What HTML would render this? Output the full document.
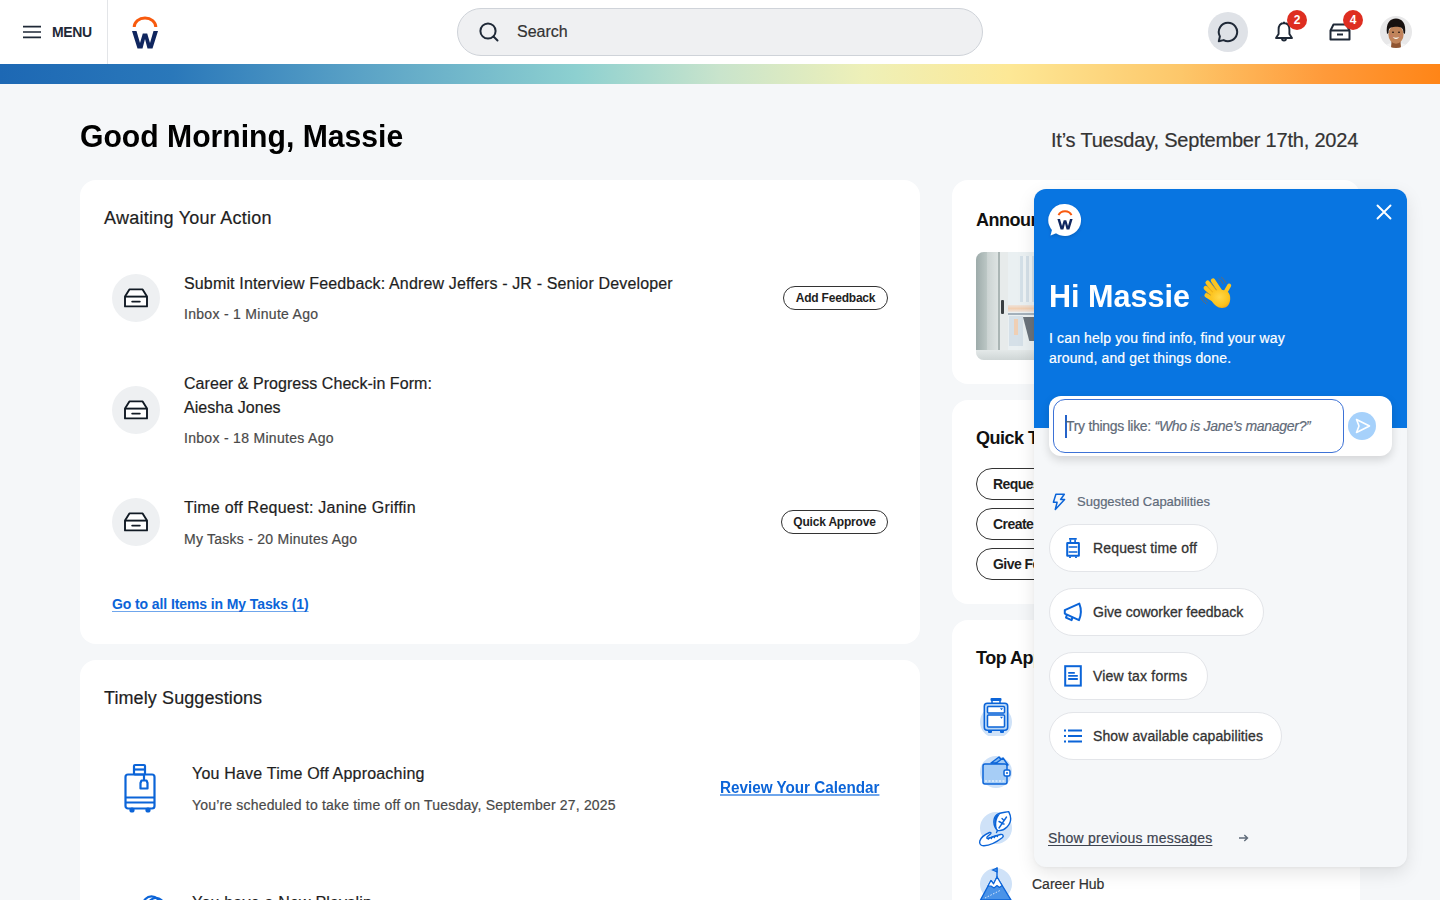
<!DOCTYPE html>
<html><head><meta charset="utf-8">
<style>
*{box-sizing:border-box;margin:0;padding:0}
html,body{width:1440px;height:900px;overflow:hidden;background:#f5f7f9;font-family:"Liberation Sans",sans-serif;color:#1e1e1e}
.a{position:absolute;white-space:nowrap;-webkit-text-stroke:0.2px currentColor}
svg{position:absolute;display:block}
#hdr{position:absolute;left:0;top:0;width:1440px;height:64px;background:#fff}
#grad{position:absolute;left:0;top:64px;width:1440px;height:20px;
 background:linear-gradient(90deg,#1d68b4 0%,#2a78ba 12%,#5aa2c6 25%,#8dd0d0 40%,#c9e4cc 50%,#eef0b8 60%,#fde896 70%,#fdc76a 82%,#ff9a3a 92%,#ff8517 100%)}
.card{position:absolute;background:#fff;border-radius:16px}
.t16{font-size:16px;line-height:24px}
.t14{font-size:14px;line-height:20px}
.t18{font-size:18px;line-height:24px}
.sub{color:#494949}
.circ{position:absolute;width:48px;height:48px;border-radius:50%;background:#eef0f2}
.btn{position:absolute;height:24px;border:1px solid #333;border-radius:12px;background:#fff;font-size:12px;line-height:22px;font-weight:700;text-align:center;color:#1e1e1e}
.link{-webkit-text-stroke:0 !important;color:#0b64d8;font-weight:700;text-decoration:underline;text-decoration-color:#6fa6ec;text-underline-offset:1.5px;text-decoration-skip-ink:none}
.qbtn{position:absolute;left:976px;height:32px;width:200px;border:1px solid #333;border-radius:16px;font-size:14px;line-height:30px;font-weight:700;padding-left:16px;background:#fff;letter-spacing:-0.55px;color:#1e1e1e}

#panel{position:absolute;left:1033.5px;top:189px;width:373.5px;height:678px;border-radius:12px;background:#f5f7f9;overflow:hidden;box-shadow:0 6px 18px rgba(0,0,0,0.10),0 1px 3px rgba(0,0,0,0.04)}
#phead{position:absolute;left:0;top:0;width:374px;height:239px;background:#0875e1}
.chip{position:absolute;left:1049px;height:48px;border-radius:24px;background:#fff;border:1px solid #e3e5e9;font-size:14px;line-height:46px;color:#333;padding-left:43px;-webkit-text-stroke:0.3px #333}
.w{color:#fff}
</style></head>
<body>
<!-- HEADER -->
<div id="hdr">
  <svg style="left:23px;top:25px" width="18" height="14" viewBox="0 0 18 14"><path d="M0 1.7H18M0 7H18M0 12.3H18" stroke="#1f2937" stroke-width="1.7"/></svg>
  <div class="a" style="left:52px;top:22px;font-size:14px;line-height:20px;font-weight:700;color:#1f2937;letter-spacing:-0.4px;-webkit-text-stroke:0">MENU</div>
  <div style="position:absolute;left:107px;top:0;width:1px;height:64px;background:#e3e5e8"></div>
  <!-- logo -->
  <svg style="left:131px;top:15px" width="28" height="34" viewBox="0 0 28 34">
    <path d="M3.2 12 A10.8 9 0 0 1 24.8 12" fill="none" stroke="#f85a0e" stroke-width="3"/>
    <path d="M1 16 L6.5 33.6 H11.5 L14 24 L16.5 33.6 H21.5 L27 16 H22.5 L19 28 L16.2 18.5 H11.8 L9 28 L5.5 16 Z" fill="#10265f"/>
  </svg>
  <!-- search -->
  <div style="position:absolute;left:457px;top:8px;width:526px;height:48px;border-radius:24px;background:#eff0f2;border:1px solid #cfd3d9"></div>
  <svg style="left:478px;top:21px" width="22" height="22" viewBox="0 0 22 22"><circle cx="10" cy="10" r="7.6" fill="none" stroke="#1f2937" stroke-width="2"/><path d="M15.5 15.5 L19.5 19.5" stroke="#1f2937" stroke-width="2" stroke-linecap="round"/></svg>
  <div class="a" style="left:517px;top:21.5px;font-size:16px;line-height:20px;color:#333">Search</div>
  <!-- chat -->
  <div style="position:absolute;left:1208px;top:12px;width:40px;height:40px;border-radius:50%;background:#dfe2e7"></div>
  <svg style="left:1217px;top:21px" width="22" height="22" viewBox="0 0 22 22"><path d="M11 1.8 A9.2 9.2 0 1 1 6.6 19.1 L1.8 20.2 L2.9 15.4 A9.2 9.2 0 0 1 11 1.8 Z" fill="none" stroke="#1f2937" stroke-width="2" stroke-linejoin="round"/></svg>
  <!-- bell -->
  <svg style="left:1274px;top:21px" width="20" height="22" viewBox="0 0 20 22"><path d="M10 2 C6.2 2 4.6 5 4.6 8.5 V13 L2 17 H18 L15.4 13 V8.5 C15.4 5 13.8 2 10 2 Z" fill="none" stroke="#1f2937" stroke-width="1.9" stroke-linejoin="round"/><path d="M10 0.8 V2.5" stroke="#1f2937" stroke-width="2"/><path d="M8 17.5 A2 2 0 0 0 12 17.5" fill="none" stroke="#1f2937" stroke-width="1.9"/></svg>
  <div style="position:absolute;left:1287px;top:10px;width:20px;height:20px;border-radius:50%;background:#de2e21;color:#fff;font-size:12px;font-weight:700;line-height:20px;text-align:center">2</div>
  <!-- inbox -->
  <svg style="left:1329px;top:23px" width="22" height="18" viewBox="0 0 22 18"><path d="M1.5 7.5 L4.5 1.5 H17.5 L20.5 7.5 V16.5 H1.5 Z M1.5 7.5 H20.5" fill="none" stroke="#1f2937" stroke-width="2" stroke-linejoin="round"/><path d="M8 11.5 H14" stroke="#1f2937" stroke-width="2"/></svg>
  <div style="position:absolute;left:1343px;top:10px;width:20px;height:20px;border-radius:50%;background:#de2e21;color:#fff;font-size:12px;font-weight:700;line-height:20px;text-align:center">4</div>
  <!-- avatar -->
  <svg style="left:1380px;top:16px" width="32" height="32" viewBox="0 0 32 32">
    <defs><clipPath id="av"><circle cx="16" cy="16" r="16"/></clipPath></defs>
    <g clip-path="url(#av)">
      <rect width="32" height="32" fill="#e8e8e9"/>
      <path d="M4 32 C6 28 9 27.5 12 27 L20 27 C23 27.5 26 28 28 32 Z" fill="#f5f5f5"/>
      <path d="M11.5 25 H20.5 L21 32 H11 Z" fill="#8f5532"/>
      <ellipse cx="16" cy="18.5" rx="7.6" ry="9.3" fill="#c0845a"/>
      <ellipse cx="11.5" cy="20" rx="1.8" ry="1.2" fill="#c9786a" opacity=".5"/>
      <ellipse cx="20.5" cy="20" rx="1.8" ry="1.2" fill="#c9786a" opacity=".5"/>
      <path d="M7 18 C5.5 7 10 2.5 16 2.5 C22 2.5 26.5 7 25 18 L23.5 17 C23.5 13 22 11.5 19 11 C16.5 10.5 13 11 11 11.5 C9 12 8.5 14 8.5 17 Z" fill="#17110f"/>
      <ellipse cx="13" cy="16.3" rx="1.1" ry="0.8" fill="#2a1a14"/>
      <ellipse cx="19" cy="16.3" rx="1.1" ry="0.8" fill="#2a1a14"/>
      <path d="M12.6 21.3 Q16 24.6 19.4 21.3 Q16 22.2 12.6 21.3 Z" fill="#fff"/>
    </g>
  </svg>
</div>
<div id="grad"></div>

<!-- TITLE -->
<div class="a" style="left:80px;top:116px;font-size:32px;line-height:40px;font-weight:700;color:#000;transform:scaleX(0.942);transform-origin:0 0;-webkit-text-stroke:0">Good Morning, Massie</div>
<div class="a" style="left:1051px;top:126px;font-size:20px;line-height:28px;color:#333;letter-spacing:-0.2px">It’s Tuesday, September 17th, 2024</div>

<!-- LEFT CARD 1 -->
<div class="card" style="left:80px;top:180px;width:840px;height:464px"></div>
<div class="a t18" style="left:104px;top:206px;letter-spacing:0.25px">Awaiting Your Action</div>


<!-- item 1 -->
<div class="circ" style="left:112px;top:274px"></div>
<svg style="left:123px;top:287px" width="26" height="22" viewBox="0 0 26 22"><path d="M2 9.6 L6.4 2.4 H19.6 L24 9.6 V19.4 H2 Z" fill="#fff" stroke="#111a24" stroke-width="1.9" stroke-linejoin="round"/><path d="M2 9.6 H24" stroke="#111a24" stroke-width="1.9"/><path d="M9.2 14.6 H16.8" stroke="#111a24" stroke-width="1.9" stroke-linecap="round"/></svg>
<div class="a t16" style="left:184px;top:271.7px;letter-spacing:0.15px">Submit Interview Feedback: Andrew Jeffers - JR - Senior Developer</div>
<div class="a t14 sub" style="left:184px;top:304.4px;letter-spacing:0.3px">Inbox - 1 Minute Ago</div>
<div class="btn" style="left:783px;top:286px;width:105px;letter-spacing:-0.2px">Add Feedback</div>
<!-- item 2 -->
<div class="circ" style="left:112px;top:386px"></div>
<svg style="left:123px;top:399px" width="26" height="22" viewBox="0 0 26 22"><path d="M2 9.6 L6.4 2.4 H19.6 L24 9.6 V19.4 H2 Z" fill="#fff" stroke="#111a24" stroke-width="1.9" stroke-linejoin="round"/><path d="M2 9.6 H24" stroke="#111a24" stroke-width="1.9"/><path d="M9.2 14.6 H16.8" stroke="#111a24" stroke-width="1.9" stroke-linecap="round"/></svg>
<div class="a t16" style="left:184px;top:371.7px;letter-spacing:0.05px">Career &amp; Progress Check-in Form:<br>Aiesha Jones</div>
<div class="a t14 sub" style="left:184px;top:428.2px;letter-spacing:0.3px">Inbox - 18 Minutes Ago</div>
<!-- item 3 -->
<div class="circ" style="left:112px;top:498px"></div>
<svg style="left:123px;top:511px" width="26" height="22" viewBox="0 0 26 22"><path d="M2 9.6 L6.4 2.4 H19.6 L24 9.6 V19.4 H2 Z" fill="#fff" stroke="#111a24" stroke-width="1.9" stroke-linejoin="round"/><path d="M2 9.6 H24" stroke="#111a24" stroke-width="1.9"/><path d="M9.2 14.6 H16.8" stroke="#111a24" stroke-width="1.9" stroke-linecap="round"/></svg>
<div class="a t16" style="left:184px;top:495.8px;letter-spacing:0.25px">Time off Request: Janine Griffin</div>
<div class="a t14 sub" style="left:184px;top:528.5px;letter-spacing:0.25px">My Tasks - 20 Minutes Ago</div>
<div class="btn" style="left:781px;top:510px;width:107px;letter-spacing:-0.2px">Quick Approve</div>
<div class="a t14 link" style="left:112px;top:593.8px;letter-spacing:-0.1px">Go to all Items in My Tasks (1)</div>

<!-- LEFT CARD 2 -->
<div class="card" style="left:80px;top:660px;width:840px;height:300px"></div>
<div class="a t18" style="left:104px;top:686px;letter-spacing:0.1px">Timely Suggestions</div>


<svg style="left:123px;top:763px" width="34" height="50" viewBox="0 0 34 50">
  <g fill="none" stroke="#0b64d8" stroke-width="2.2" stroke-linejoin="round">
    <rect x="11" y="2" width="11" height="9.5" rx="1"/>
    <path d="M11 6.5 H22"/>
    <rect x="2.5" y="11.5" width="29" height="34" rx="2.5"/>
    <path d="M2.5 34.5 H31.5 M2.5 39.5 H31.5"/>
    <path d="M21 11.5 V17.5 M18.5 17.5 H23.5 L24.5 20 V25.5 H17.5 V20 Z"/>
  </g>
  <circle cx="9" cy="47" r="2.6" fill="#0b64d8"/><circle cx="25" cy="47" r="2.6" fill="#0b64d8"/>
</svg>
<div class="a t16" style="left:192px;top:762px;letter-spacing:0.2px">You Have Time Off Approaching</div>
<div class="a t14 sub" style="left:192px;top:794.5px;letter-spacing:0.18px">You’re scheduled to take time off on Tuesday, September 27, 2025</div>
<div class="a t16 link" style="left:720px;top:776px;transform:scaleX(0.952);transform-origin:0 0;text-underline-offset:1px;text-decoration-thickness:1.5px">Review Your Calendar</div>
<svg style="left:141px;top:894px" width="26" height="6" viewBox="0 0 26 6"><g fill="none" stroke="#0b64d8" stroke-width="2.2"><circle cx="10.5" cy="11" r="8.6"/><circle cx="15" cy="11.5" r="7.6"/></g></svg>
<div class="a t16" style="left:192px;top:890.8px;letter-spacing:0.2px">You have a New Playslip</div>

<!-- RIGHT CARDS -->
<div class="card" style="left:952px;top:180px;width:408px;height:204px"></div>
<div class="card" style="left:952px;top:400px;width:408px;height:204px"></div>
<div class="card" style="left:952px;top:620px;width:408px;height:340px"></div>


<div class="a t18" style="left:976px;top:207.5px;font-weight:700;letter-spacing:-0.5px;-webkit-text-stroke:0;color:#111">Announcements</div>
<div style="position:absolute;left:976px;top:252px;width:200px;height:108px;border-radius:8px;overflow:hidden;background:#eef2f3"><div style="position:absolute;left:0;top:0;width:200px;height:108px;filter:blur(0.5px)">
  <div style="position:absolute;left:0;top:0;width:11px;height:108px;background:linear-gradient(90deg,#9dabaa,#bcc7c5)"></div>
  <div style="position:absolute;left:11px;top:0;width:11px;height:108px;background:linear-gradient(90deg,#cbd3d2,#dde3e2)"></div>
  <div style="position:absolute;left:22px;top:0;width:1.5px;height:108px;background:#aab5b4"></div>
  <div style="position:absolute;left:23.5px;top:0;width:8px;height:108px;background:#e7ebeb"></div>
  <div style="position:absolute;left:31.5px;top:0;width:170px;height:98px;background:#eaf0f2"></div>
  <div style="position:absolute;left:44px;top:4px;width:16px;height:46px;background:repeating-linear-gradient(90deg,#d4e0e8 0 3px,#eef3f5 3px 6px)"></div>
  <div style="position:absolute;left:31.5px;top:53px;width:170px;height:7px;background:linear-gradient(180deg,#eee4dc,#f2cfb2 50%,#ece6e2)"></div>
  <div style="position:absolute;left:31.5px;top:61px;width:170px;height:2px;background:#a3b0bb"></div>
  <div style="position:absolute;left:33px;top:64px;width:14px;height:30px;background:#d5e0e8"></div>
  <div style="position:absolute;left:38px;top:67px;width:4px;height:16px;background:#efcfb4"></div>
  <div style="position:absolute;left:47px;top:65px;width:14px;height:24px;background:#6a737c;clip-path:polygon(0 0,100% 0,100% 100%,45% 100%)"></div>
  <div style="position:absolute;left:25px;top:48px;width:3px;height:14px;background:#3a3f42;border-radius:1px"></div>
  <div style="position:absolute;left:0;top:98px;width:200px;height:10px;background:linear-gradient(180deg,#e4e9e9,#cfd6d6)"></div>
</div></div>
<div class="a t18" style="left:976px;top:425.5px;font-weight:700;letter-spacing:-0.5px;-webkit-text-stroke:0;color:#111">Quick Tasks</div>
<div class="qbtn" style="top:468px">Request Time Off</div>
<div class="qbtn" style="top:508px">Create Expense Report</div>
<div class="qbtn" style="top:548px">Give Feedback</div>
<div class="a t18" style="left:976px;top:645.8px;font-weight:700;letter-spacing:-0.5px;-webkit-text-stroke:0;color:#111">Top Apps</div>

<svg style="left:978px;top:696px" width="36" height="40" viewBox="0 0 36 40">
  <circle cx="18" cy="26" r="16" fill="#cfe2f8"/>
  <path d="M14 7 V4 H22 V7" fill="none" stroke="#0b64d8" stroke-width="1.5"/>
  <rect x="12.5" y="2" width="11" height="3" rx="1" fill="#0b64d8"/>
  <g fill="none" stroke="#0b64d8" stroke-width="1.5" stroke-linejoin="round">
    <rect x="6.3" y="7.3" width="23.4" height="27" rx="3" fill="#b9d7f7"/>
    <rect x="9.5" y="10.5" width="17" height="6.5" rx="1" fill="#fff"/>
    <rect x="9.5" y="19" width="17" height="12" rx="1" fill="#fff"/>
  </g>
  <path d="M22 12.2 H25 L23.5 14.2 Z M22 20.7 H25 L23.5 22.7 Z" fill="#0b64d8"/>
  <rect x="10" y="34" width="4" height="3" rx="1" fill="#0b64d8"/><rect x="22" y="34" width="4" height="3" rx="1" fill="#0b64d8"/>
</svg>
<svg style="left:978px;top:754px" width="36" height="36" viewBox="0 0 36 36">
  <circle cx="18" cy="18" r="16" fill="#cfe2f8"/>
  <g stroke="#0b64d8" stroke-width="1.5" stroke-linejoin="round">
    <path d="M13 9 L21 3 L26 9 Z" fill="#7db6f2"/>
    <path d="M17 10 L25 4 L30 11 Z" fill="#a6cdf6"/>
    <rect x="5" y="10" width="24" height="20" rx="2" fill="#a6cdf6"/>
    <rect x="26" y="16" width="6" height="6" rx="1.5" fill="#fff"/>
  </g>
  <path d="M7 27 H27" stroke="#fff" stroke-width="1" stroke-dasharray="2 1.5"/>
  <circle cx="29" cy="19" r="1" fill="#0b64d8"/>
</svg>
<svg style="left:976px;top:810px" width="38" height="38" viewBox="0 0 38 38">
  <circle cx="20" cy="18" r="16" fill="#cfe2f8"/>
  <g fill="none" stroke="#0b64d8" stroke-width="1.4" stroke-linejoin="round" stroke-linecap="round">
    <path d="M21.5 20.5 C17 16 16.5 8 21 4.5 C24 2.5 29 2.5 32.7 1.6 C35.5 7 35 13 31 17 C28 20 24.5 21 21.5 20.5 Z" fill="#fff"/>
    <path d="M21.5 20.5 L20.5 22.5"/>
    <path d="M23 18 L30.5 7 M25 12.5 L23 11.5 M25.5 13.5 L28 14 M27.5 10 L26 8.5"/>
    <path d="M13.5 22.5 C10 24 5 27 3.8 31 C3 34 5 36 8 35.8 C14 35.5 22 31 26.5 27.5 C28 26 27 24 24.5 24.5 C20 25.5 15 27.5 12 28.5 C10.5 29 10.5 27 12 26 L14.5 24 C15.5 23 14.8 22 13.5 22.5 Z" fill="#fff"/>
    <path d="M12.5 29 C13 27.5 15 27 15.5 28.5 M15.5 28 C16 26.5 18 26 18.5 27.5 M18.5 27 C19 25.5 21 25.2 21.5 26.5"/>
  </g>
  <path d="M21 4.5 C17.5 8 17 15 21.3 20 C19.5 14 20 9 24 4 Z" fill="#0b64d8"/>
</svg>
<svg style="left:976px;top:864px" width="40" height="40" viewBox="0 0 40 40">
  <circle cx="20" cy="20" r="16" fill="#cfe2f8"/>
  <path d="M4.5 36 L15 16.5 L17.5 20 L21 13 L35 36 Z" fill="#4a93e8" stroke="#0b64d8" stroke-width="1.4" stroke-linejoin="round"/>
  <path d="M12 22 L15 16.5 L17.5 20 L21 13 L26 21.5 L23.5 23.5 L21 21.5 L18 24 L15 22 Z" fill="#fff" stroke="#0b64d8" stroke-width="1.1" stroke-linejoin="round"/>
  <path d="M21 13 V3.5" stroke="#0b64d8" stroke-width="1.4"/>
  <path d="M21 4 L16.5 6 L21 8 Z" fill="#4a93e8" stroke="#0b64d8" stroke-width="1.1"/>
  <path d="M9 34 L25 26" stroke="#fff" stroke-width="0.8" stroke-dasharray="1.5 1.5"/>
</svg>
<div class="a t14" style="left:1032px;top:874px;color:#333">Career Hub</div>


<!-- CHAT PANEL -->
<div id="panel"><div id="phead"></div></div>
<svg style="left:1046px;top:202px" width="38" height="38" viewBox="0 0 38 38">
  <defs><filter id="bs" x="-30%" y="-30%" width="160%" height="160%"><feDropShadow dx="0" dy="1.5" stdDeviation="1.5" flood-color="#003a80" flood-opacity="0.35"/></filter></defs>
  <path d="M19 2 A16 16 0 1 1 10 31.2 L4.5 33.5 L6 28 A16 16 0 0 1 19 2 Z" fill="#fff" filter="url(#bs)"/>
  <path d="M12.5 13.2 A7 6.3 0 0 1 25.5 13.2" fill="none" stroke="#f85a0e" stroke-width="1.9"/>
  <path d="M11.4 17 L14.6 27.5 H17.4 L19 21.5 L20.6 27.5 H23.4 L26.6 17 H24 L22 24 L20.3 18.3 H17.7 L16 24 L14 17 Z" fill="#10265f"/>
</svg>
<svg style="left:1375px;top:203px" width="18" height="18" viewBox="0 0 18 18"><path d="M2.5 2.5 L15.5 15.5 M15.5 2.5 L2.5 15.5" stroke="#fff" stroke-width="1.9" stroke-linecap="round"/></svg>
<div class="a w" style="left:1049px;top:276px;font-size:32px;line-height:40px;font-weight:700;transform:scaleX(0.955);transform-origin:0 0;-webkit-text-stroke:0">Hi Massie</div>
<svg style="left:1198px;top:276px" width="36" height="36" viewBox="0 0 36 36">
  <defs><radialGradient id="hg" cx="0.45" cy="0.4" r="0.7"><stop offset="0" stop-color="#ffd84a"/><stop offset="0.7" stop-color="#fcc21b"/><stop offset="1" stop-color="#f29a12"/></radialGradient></defs>
  <g stroke="#fcc520" stroke-linecap="round" stroke-width="4.4">
    <path d="M15 4.5 L22 15"/>
    <path d="M9.6 6.6 L18.5 17.5"/>
    <path d="M7.8 12 L16.5 19.5"/>
    <path d="M8.6 19.3 L15.5 23.5"/>
    <path d="M31.2 9.5 L27.5 16" stroke-width="4"/>
  </g>
  <g stroke="#e09a12" stroke-width="0.7" stroke-linecap="round" fill="none"><path d="M12.6 6.8 L19.6 16"/><path d="M8.7 10 L16.5 18"/><path d="M8.3 16 L15.5 21"/></g>
  <path d="M14 17 C17 14 22 13 27 14.5 C31 15.5 32.6 19 32.2 23.5 C31.8 28.5 29 32 24 32 C19.5 32 16.5 29 14 25.5 C12.5 23 12 19.5 14 17 Z" fill="url(#hg)"/>
  <g fill="none" stroke="#6b6b6b" stroke-width="0.9" stroke-linecap="round">
    <path d="M20.8 2.5 Q23.5 4 25 7.8"/><path d="M23.5 1.3 Q26.5 3 28 7"/>
    <path d="M2.5 21.5 Q4.5 25.5 8 28"/><path d="M4.5 20.5 Q6.3 23.8 9.5 26"/>
  </g>
</svg>
<div class="a w t14" style="left:1049px;top:328.2px;letter-spacing:0.14px">I can help you find info, find your way</div>
<div class="a w t14" style="left:1049px;top:348.2px;letter-spacing:0.14px">around, and get things done.</div>
<div style="position:absolute;left:1049px;top:396px;width:343px;height:60px;border-radius:12px;background:#fff;box-shadow:0 4px 10px rgba(0,0,0,0.14)"></div>
<div style="position:absolute;left:1053px;top:399px;width:291px;height:54px;border-radius:12px;background:#fff;border:1.5px solid #3d72d6"></div>
<div style="position:absolute;left:1065px;top:415px;width:1.5px;height:23px;background:#2563c9"></div>
<div class="a t14" style="left:1066px;top:416.3px;color:#5f6a78;letter-spacing:-0.3px">Try things like: <i>“Who is Jane’s manager?”</i></div>
<svg style="left:1348px;top:412px" width="28" height="28" viewBox="0 0 28 28"><circle cx="14" cy="14" r="14" fill="#a6d1fb"/><path d="M8.5 7.5 L21.5 14 L8.5 20.5 L11 14 Z" fill="none" stroke="#fff" stroke-width="1.6" stroke-linejoin="round"/></svg>
<svg style="left:1052px;top:493px" width="16" height="18" viewBox="0 0 16 18"><path d="M3.9 1.2 L12.3 1.2 L8.6 6.5 H12.6 L3.3 16.5 L5.1 9.3 H1.4 Z" fill="none" stroke="#0b64d8" stroke-width="1.5" stroke-linejoin="round"/></svg>
<div class="a" style="left:1077px;top:491.8px;font-size:13px;line-height:20px;color:#5f6b7a">Suggested Capabilities</div>
<div class="chip" style="top:524px;width:169px;letter-spacing:0.15px">Request time off</div>
<div class="chip" style="top:588px;width:215px">Give coworker feedback</div>
<div class="chip" style="top:652px;width:159px;letter-spacing:0.2px">View tax forms</div>
<div class="chip" style="top:712px;width:233px;letter-spacing:0.1px">Show available capabilities</div>
<svg style="left:1063px;top:536px" width="20" height="24" viewBox="0 0 20 24"><g fill="#0b64d8"><rect x="6" y="1.9" width="7.8" height="1.8" rx="0.4"/><rect x="6.6" y="3.5" width="1.6" height="3"/><rect x="11.3" y="3.5" width="1.6" height="3"/><rect x="6" y="20.5" width="2" height="1.4"/><rect x="12" y="20.5" width="2" height="1.4"/></g><g fill="none" stroke="#0b64d8"><rect x="4.2" y="7.1" width="11.7" height="12.6" stroke-width="2" rx="0.3"/><path d="M6.2 11 H13.8 M6.2 16 H13.8" stroke-width="1.6" stroke-linecap="round"/></g></svg>
<svg style="left:1062px;top:601px" width="22" height="22" viewBox="0 0 22 22"><g fill="none" stroke="#0b64d8" stroke-width="2" stroke-linejoin="round"><path d="M2.8 9.2 L17.3 2.6 Q20.6 10.8 17 19.2 L2.8 12.6 Z"/><path d="M5 13.6 L4 16.6 L9.6 19.2 L10.6 15.9"/></g></svg>
<svg style="left:1064px;top:665px" width="18" height="22" viewBox="0 0 18 22"><g fill="none" stroke="#0b64d8" stroke-width="2"><rect x="1.2" y="1.2" width="15.6" height="19.4"/><path d="M4.2 7.8 H10.8 M4.2 10.8 H13.8 M4.2 14 H13.8" stroke-width="1.8"/></g></svg>
<svg style="left:1063px;top:728px" width="20" height="16" viewBox="0 0 20 16"><g fill="#0b64d8"><rect x="1" y="1.5" width="2" height="2"/><rect x="1" y="7" width="2" height="2"/><rect x="1" y="12.5" width="2" height="2"/><rect x="5" y="1.5" width="14" height="2"/><rect x="5" y="7" width="14" height="2"/><rect x="5" y="12.5" width="14" height="2"/></g></svg>
<div class="a t14" style="left:1048px;top:828px;color:#3d4450;text-decoration:underline;text-underline-offset:2px;text-decoration-skip-ink:none;text-decoration-thickness:1px;letter-spacing:0.22px">Show previous messages</div>
<svg style="left:1237px;top:832px" width="13" height="12" viewBox="0 0 13 12"><path d="M2 6 H10.5 M7.3 3 L10.5 6 L7.3 9" fill="none" stroke="#5f6b7a" stroke-width="1.4"/></svg>

</body></html>
